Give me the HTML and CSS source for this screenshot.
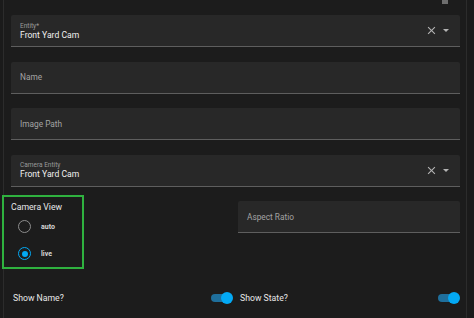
FILE: index.html
```html
<!DOCTYPE html>
<html lang="en">

<head>
    <meta charset="UTF-8">
    <meta name="viewport" content="width=device-width, initial-scale=1.0">
    <title>Picture Entity Card Editor</title>
    <link rel="stylesheet" href="styles.css">
</head>

<body>
    <div class="card">
        <!-- sisa elemen di atas -->
        <div class="top-strip"><span class="stub"></span></div>

        <!-- Entity -->
        <div class="field filled">
            <div class="field-text">
                <span class="float-label">Entity*</span>
                <span class="value">Front Yard Cam</span>
            </div>
            <div class="field-icons">
                <svg class="clear-icon" viewBox="0 0 24 24" width="13" height="13">
                    <path d="M19,6.41L17.59,5L12,10.59L6.41,5L5,6.41L10.59,12L5,17.59L6.41,19L12,13.41L17.59,19L19,17.59L13.41,12L19,6.41Z" />
                </svg>
                <svg class="drop-icon" viewBox="0 0 10 5" width="6" height="3">
                    <path d="M0 0 L10 0 L5 5 Z" />
                </svg>
            </div>
        </div>

        <div class="field">
            <span class="label">Name</span>
        </div>

        <div class="field">
            <span class="label">Image Path</span>
        </div>

        <!-- Camera Entity -->
        <div class="field filled last">
            <div class="field-text">
                <span class="float-label">Camera Entity</span>
                <span class="value">Front Yard Cam</span>
            </div>
            <div class="field-icons">
                <svg class="clear-icon" viewBox="0 0 24 24" width="13" height="13">
                    <path d="M19,6.41L17.59,5L12,10.59L6.41,5L5,6.41L10.59,12L5,17.59L6.41,19L12,13.41L17.59,19L19,17.59L13.41,12L19,6.41Z" />
                </svg>
                <svg class="drop-icon" viewBox="0 0 10 5" width="6" height="3">
                    <path d="M0 0 L10 0 L5 5 Z" />
                </svg>
            </div>
        </div>

        <div class="options-grid">
            <div class="radio-group">
                <div class="radio-title">Camera View</div>
                <label class="radio-option">
                    <span class="radio"></span>
                    <span class="radio-text">auto</span>
                </label>
                <label class="radio-option">
                    <span class="radio checked"></span>
                    <span class="radio-text">live</span>
                </label>
            </div>

            <div class="field aspect">
                <span class="label">Aspect Ratio</span>
            </div>

            <div class="switch-row">
                <span class="switch-text">Show Name?</span>
                <span class="switch"><span class="track"></span><span class="thumb"></span></span>
            </div>

            <div class="switch-row">
                <span class="switch-text">Show State?</span>
                <span class="switch"><span class="track"></span><span class="thumb"></span></span>
            </div>
        </div>
    </div>
</body>

</html>
```

FILE: styles.css
```css
/* Gaya umum */
body {
    font-family: Roboto, 'Noto Sans', sans-serif;
    background-color: #1b1b1b;
    margin: 0;
    padding: 0;
    overflow: hidden;
}

.card {
    width: 464px;
    height: 318px;
    margin-left: 3px;
    padding: 0 6px 0 7px;
    border-left: 1px solid #2c2c2c;
    border-right: 1px solid #2c2c2c;
    box-sizing: border-box;
    background-color: #1c1c1c;
}

.top-strip {
    height: 15px;
    display: flex;
    justify-content: flex-end;
}

.stub {
    width: 6px;
    height: 4px;
    margin-right: 12px;
    background-color: #6e6e6e;
}

/* Text field */
.field {
    height: 32px;
    margin-bottom: 14.5px;
    padding: 0 9px;
    display: flex;
    align-items: center;
    background-color: #282828;
    border-bottom: 1px solid #5e5e5e;
    border-radius: 2px 2px 0 0;
    box-sizing: border-box;
}

.field.last {
    margin-bottom: 8.5px;
}

.field-text {
    flex: 1;
    display: flex;
    flex-direction: column;
    padding-top: 1px;
}

.float-label {
    font-size: 6.5px;
    line-height: 8px;
    color: #9a9a9a;
}

.value {
    font-size: 8.6px;
    line-height: 11px;
    color: #f0f0f0;
}

.label {
    font-size: 8.3px;
    color: #a3a3a3;
}

.field-icons {
    display: flex;
    align-items: center;
    gap: 5px;
    margin-right: 2px;
}

.clear-icon,
.drop-icon {
    fill: #b4b4b4;
}

/* Grid bawah */
.options-grid {
    display: grid;
    grid-template-columns: 1fr 1fr;
    column-gap: 5px;
}

.radio-group {
    width: 82px;
    height: 74px;
    margin-left: -9px;
    border: 2px solid #2fb23f;
    box-sizing: border-box;
}

.radio-title {
    padding: 4px 0 0 7px;
    height: 16px;
    box-sizing: border-box;
    font-size: 8.7px;
    line-height: 12px;
    color: #e8e8e8;
}

.radio-option {
    height: 27px;
    display: flex;
    align-items: center;
    padding-left: 14px;
}

.radio {
    width: 13px;
    height: 13px;
    border: 1.5px solid #8c8c8c;
    border-radius: 50%;
    box-sizing: border-box;
    display: flex;
    align-items: center;
    justify-content: center;
}

.radio.checked {
    border-color: #03a9f4;
}

.radio.checked::after {
    content: "";
    width: 6px;
    height: 6px;
    border-radius: 50%;
    background-color: #03a9f4;
}

.radio-text {
    margin-left: 10px;
    font-size: 7px;
    font-weight: bold;
    color: #d6d6d6;
}

.field.aspect {
    margin-top: 6px;
    margin-bottom: 0;
}

/* Switch */
.switch-row {
    height: 24px;
    margin-top: 17px;
    padding-left: 2px;
    display: flex;
    align-items: center;
    justify-content: space-between;
}

.switch-text {
    font-size: 8.7px;
    color: #e8e8e8;
}

.switch {
    position: relative;
    width: 22px;
    height: 12px;
}

.track {
    position: absolute;
    left: 0;
    top: 2px;
    width: 20px;
    height: 8px;
    border-radius: 4px;
    background-color: #1f6f9c;
}

.thumb {
    position: absolute;
    right: 0;
    top: 0;
    width: 12px;
    height: 12px;
    border-radius: 50%;
    background-color: #03a9f4;
}
```
